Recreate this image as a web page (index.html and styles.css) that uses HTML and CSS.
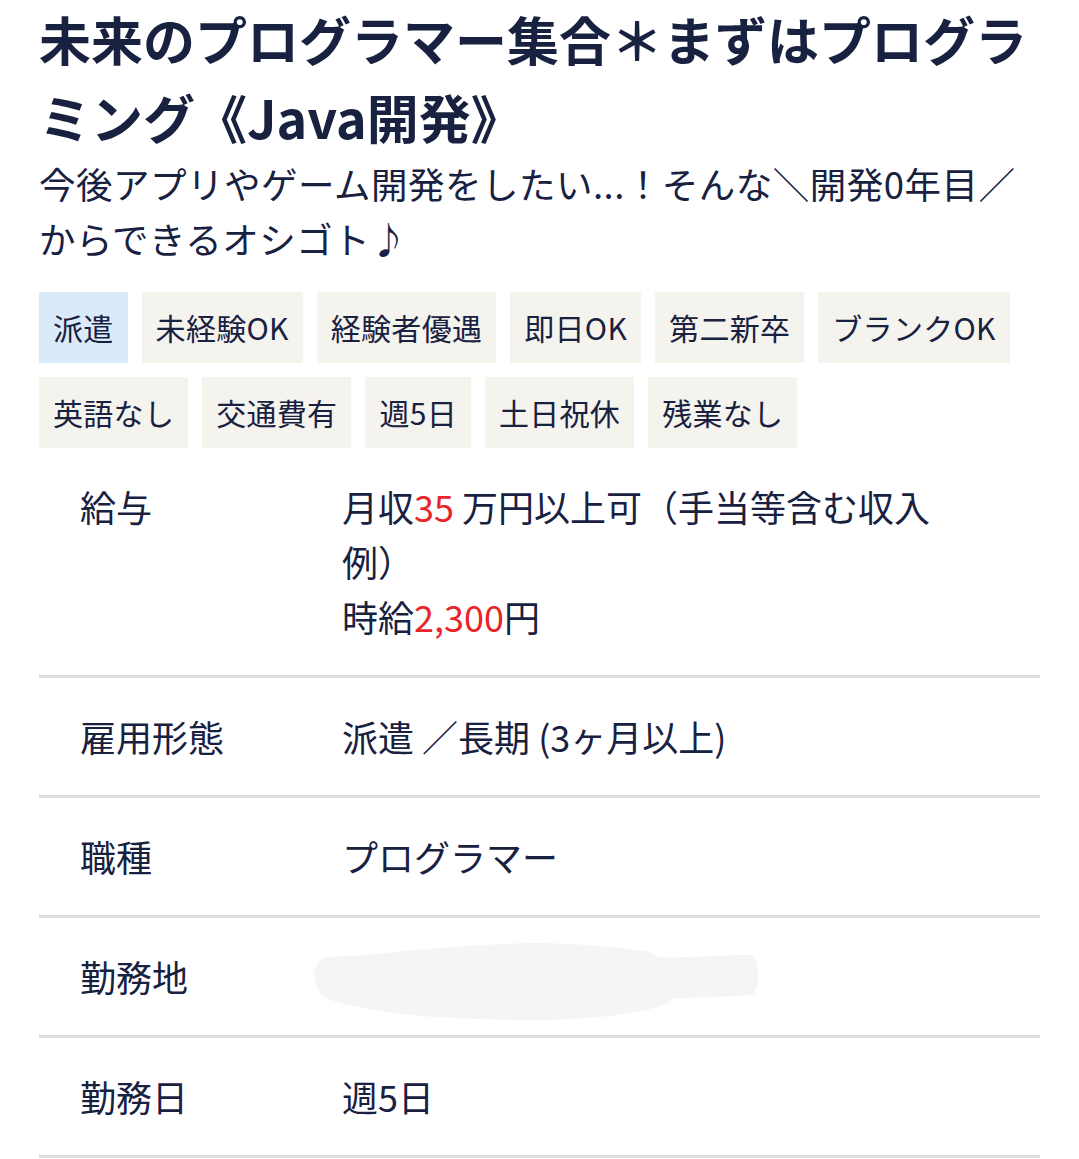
FILE: index.html
```html
<!DOCTYPE html>
<html lang="ja">
<head>
    <meta charset="UTF-8">
    <meta name="viewport" content="width=device-width, initial-scale=1.0">
    <title>未来のプログラマー集合</title>
    <link rel="stylesheet" href="styles.css">
</head>
<body>
    <div class="job">
        <h1 class="job-title">未来のプログラマー集合＊まずはプログラミング《Java開発》</h1>
        <p class="job-catch">今後アプリやゲーム開発をしたい...！そんな＼開発0年目／からできるオシゴト♪</p>

        <ul class="tags">
            <li class="tag tag-type">派遣</li>
            <li class="tag">未経験OK</li>
            <li class="tag">経験者優遇</li>
            <li class="tag">即日OK</li>
            <li class="tag">第二新卒</li>
            <li class="tag">ブランクOK</li>
            <li class="tag">英語なし</li>
            <li class="tag">交通費有</li>
            <li class="tag">週5日</li>
            <li class="tag">土日祝休</li>
            <li class="tag">残業なし</li>
        </ul>

        <dl class="details">
            <div class="row">
                <dt>給与</dt>
                <dd>月収<span class="em">35</span> 万円以上可（手当等含む収入例）<br>時給<span class="em">2,300</span>円</dd>
            </div>
            <div class="row">
                <dt>雇用形態</dt>
                <dd>派遣 ／長期 (3ヶ月以上)</dd>
            </div>
            <div class="row">
                <dt>職種</dt>
                <dd>プログラマー</dd>
            </div>
            <div class="row">
                <dt>勤務地</dt>
                <dd class="hidden-value">
                    <!-- redacted address -->
                    <svg class="smudge" width="446" height="78" viewBox="0 0 446 78">
                        <path d="M0 30 C2 20 6 15 14 14 C30 13 40 13 50 12 C110 6 170 1 220 0 C260 0 300 4 330 8 C338 9 342 11 344 14 C380 15 410 12 438 12 C446 14 446 48 438 52 C410 54 380 55 360 55 C356 58 354 60 350 62 C320 72 270 77 220 77 C160 77 110 74 80 70 C50 66 24 60 12 55 C4 50 0 42 0 30 Z" fill="#f5f5f5"/>
                    </svg>
                </dd>
            </div>
            <div class="row">
                <dt>勤務日</dt>
                <dd>週5日</dd>
            </div>
        </dl>
    </div>
</body>
</html>
```

FILE: styles.css
```css
body {
    margin: 0;
    background: #fff;
    color: #18213f;
    font-family: 'Noto Sans CJK JP', 'Noto Sans', sans-serif;
}

.job {
    padding: 0 39px;
}

.job-title {
    margin: 0;
    font-size: 52px;
    line-height: 78px;
    font-weight: 700;
}

.job-catch {
    margin: 0;
    font-size: 36.5px;
    line-height: 55px;
    letter-spacing: 0.5px;
}

.tags {
    list-style: none;
    margin: 26px 0 0;
    padding: 0;
    display: flex;
    flex-wrap: wrap;
    gap: 14px;
}

.tag {
    background: #f5f3ee;
    font-size: 30px;
    line-height: 45px;
    padding: 13px 14px;
    letter-spacing: 0.3px;
}

.tag-type {
    background: #dbeafb;
}

.details {
    margin: 0;
}

.row {
    display: grid;
    grid-template-columns: 262px 1fr;
    padding: 31px 78px 31px 41px;
    border-bottom: 3px solid #dcdcdc;
    font-size: 36px;
    line-height: 55px;
}

.row dt,
.row dd {
    margin: 0;
}

.em {
    color: #e8262a;
}

.hidden-value {
    position: relative;
    min-height: 55px;
}

.smudge {
    position: absolute;
    left: -28px;
    top: -6px;
}
```
